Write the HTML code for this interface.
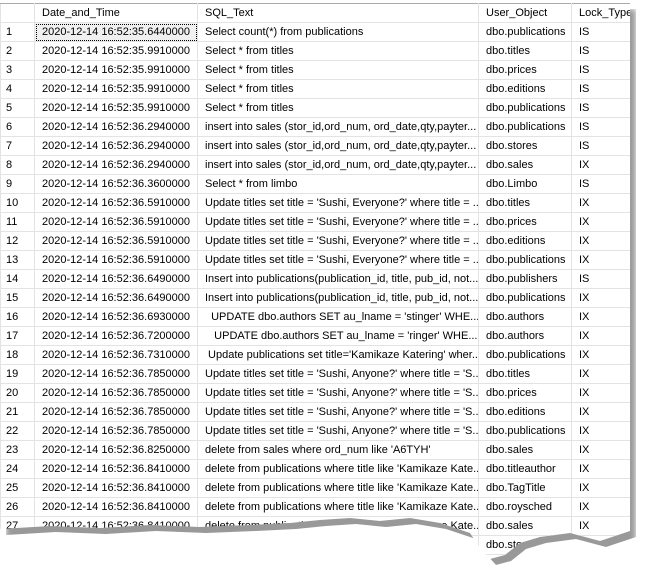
<!DOCTYPE html><html><head><style>
body{margin:0;width:645px;height:576px;background:#fff;overflow:hidden;position:relative;font-family:"Liberation Sans",Arial,sans-serif;font-size:11px;color:#000}
#shadow{position:absolute;left:6px;top:9px;width:630px;height:560px;background:#999;filter:blur(3px);clip-path:polygon(0 0,630px 0,630px 528px,600px 538px,570px 530px,540px 534px,520px 540px,505px 552px,490px 556px,480px 545px,470px 530px,440px 520px,410px 515px,380px 518px,350px 515px,320px 517px,290px 520px,250px 522px,200px 524px,150px 522px,100px 525px,50px 523px,0 526px)}
#g{position:absolute;left:0;top:3px;width:630px;height:560px;background:#fff;overflow:hidden;clip-path:polygon(0 0,630px 0,630px 528px,600px 538px,570px 530px,540px 534px,520px 540px,505px 552px,490px 556px,480px 545px,470px 530px,440px 520px,410px 515px,380px 518px,350px 515px,320px 517px,290px 520px,250px 522px,200px 524px,150px 522px,100px 525px,50px 523px,0 526px)}
table{border-collapse:collapse;table-layout:fixed;width:632px}
td{height:18px;border:1px solid #e3e3e3;padding:0 0 0 7px;white-space:nowrap;overflow:hidden;line-height:18px}
tr.h td{height:17px;border-top:1px solid #aaa}
td:first-child{padding-left:5px}
</style></head><body><div id="shadow"></div><div id="g"><table>
<colgroup><col style="width:34px"><col style="width:163px"><col style="width:281px"><col style="width:93px"><col style="width:61px"></colgroup>
<tr class="h"><td></td><td>Date_and_Time</td><td>SQL_Text</td><td>User_Object</td><td>Lock_Type</td></tr>
<tr><td>1</td><td style="outline:1px dotted #000;outline-offset:-2px;background:#f0f0f0">2020-12-14 16:52:35.6440000</td><td>Select count(*) from publications</td><td>dbo.publications</td><td>IS</td></tr>
<tr><td>2</td><td>2020-12-14 16:52:35.9910000</td><td>Select * from titles</td><td>dbo.titles</td><td>IS</td></tr>
<tr><td>3</td><td>2020-12-14 16:52:35.9910000</td><td>Select * from titles</td><td>dbo.prices</td><td>IS</td></tr>
<tr><td>4</td><td>2020-12-14 16:52:35.9910000</td><td>Select * from titles</td><td>dbo.editions</td><td>IS</td></tr>
<tr><td>5</td><td>2020-12-14 16:52:35.9910000</td><td>Select * from titles</td><td>dbo.publications</td><td>IS</td></tr>
<tr><td>6</td><td>2020-12-14 16:52:36.2940000</td><td>insert into sales  (stor_id,ord_num, ord_date,qty,payter...</td><td>dbo.publications</td><td>IS</td></tr>
<tr><td>7</td><td>2020-12-14 16:52:36.2940000</td><td>insert into sales  (stor_id,ord_num, ord_date,qty,payter...</td><td>dbo.stores</td><td>IS</td></tr>
<tr><td>8</td><td>2020-12-14 16:52:36.2940000</td><td>insert into sales  (stor_id,ord_num, ord_date,qty,payter...</td><td>dbo.sales</td><td>IX</td></tr>
<tr><td>9</td><td>2020-12-14 16:52:36.3600000</td><td>Select * from limbo</td><td>dbo.Limbo</td><td>IS</td></tr>
<tr><td>10</td><td>2020-12-14 16:52:36.5910000</td><td>Update titles set title = 'Sushi, Everyone?' where title = ...</td><td>dbo.titles</td><td>IX</td></tr>
<tr><td>11</td><td>2020-12-14 16:52:36.5910000</td><td>Update titles set title = 'Sushi, Everyone?' where title = ...</td><td>dbo.prices</td><td>IX</td></tr>
<tr><td>12</td><td>2020-12-14 16:52:36.5910000</td><td>Update titles set title = 'Sushi, Everyone?' where title = ...</td><td>dbo.editions</td><td>IX</td></tr>
<tr><td>13</td><td>2020-12-14 16:52:36.5910000</td><td>Update titles set title = 'Sushi, Everyone?' where title = ...</td><td>dbo.publications</td><td>IX</td></tr>
<tr><td>14</td><td>2020-12-14 16:52:36.6490000</td><td>Insert into publications(publication_id, title, pub_id, not...</td><td>dbo.publishers</td><td>IS</td></tr>
<tr><td>15</td><td>2020-12-14 16:52:36.6490000</td><td>Insert into publications(publication_id, title, pub_id, not...</td><td>dbo.publications</td><td>IX</td></tr>
<tr><td>16</td><td>2020-12-14 16:52:36.6930000</td><td>&nbsp;&nbsp;UPDATE dbo.authors SET au_lname = 'stinger' WHE...</td><td>dbo.authors</td><td>IX</td></tr>
<tr><td>17</td><td>2020-12-14 16:52:36.7200000</td><td>&nbsp;&nbsp;&nbsp;UPDATE dbo.authors SET au_lname = 'ringer' WHE...</td><td>dbo.authors</td><td>IX</td></tr>
<tr><td>18</td><td>2020-12-14 16:52:36.7310000</td><td>&nbsp;Update publications set title='Kamikaze Katering' wher...</td><td>dbo.publications</td><td>IX</td></tr>
<tr><td>19</td><td>2020-12-14 16:52:36.7850000</td><td>Update titles set title = 'Sushi, Anyone?' where title = 'S...</td><td>dbo.titles</td><td>IX</td></tr>
<tr><td>20</td><td>2020-12-14 16:52:36.7850000</td><td>Update titles set title = 'Sushi, Anyone?' where title = 'S...</td><td>dbo.prices</td><td>IX</td></tr>
<tr><td>21</td><td>2020-12-14 16:52:36.7850000</td><td>Update titles set title = 'Sushi, Anyone?' where title = 'S...</td><td>dbo.editions</td><td>IX</td></tr>
<tr><td>22</td><td>2020-12-14 16:52:36.7850000</td><td>Update titles set title = 'Sushi, Anyone?' where title = 'S...</td><td>dbo.publications</td><td>IX</td></tr>
<tr><td>23</td><td>2020-12-14 16:52:36.8250000</td><td>delete from sales where ord_num like 'A6TYH'</td><td>dbo.sales</td><td>IX</td></tr>
<tr><td>24</td><td>2020-12-14 16:52:36.8410000</td><td>delete from publications where title like 'Kamikaze Kate...</td><td>dbo.titleauthor</td><td>IX</td></tr>
<tr><td>25</td><td>2020-12-14 16:52:36.8410000</td><td>delete from publications where title like 'Kamikaze Kate...</td><td>dbo.TagTitle</td><td>IX</td></tr>
<tr><td>26</td><td>2020-12-14 16:52:36.8410000</td><td>delete from publications where title like 'Kamikaze Kate...</td><td>dbo.roysched</td><td>IX</td></tr>
<tr><td>27</td><td>2020-12-14 16:52:36.8410000</td><td>delete from publications where title like 'Kamikaze Kate...</td><td>dbo.sales</td><td>IX</td></tr>
<tr><td>28</td><td>2020-12-14 16:52:36.8410000</td><td>delete from publications where title like 'Kamikaze Kate...</td><td>dbo.stores</td><td>IX</td></tr>
</table></div></body></html>
